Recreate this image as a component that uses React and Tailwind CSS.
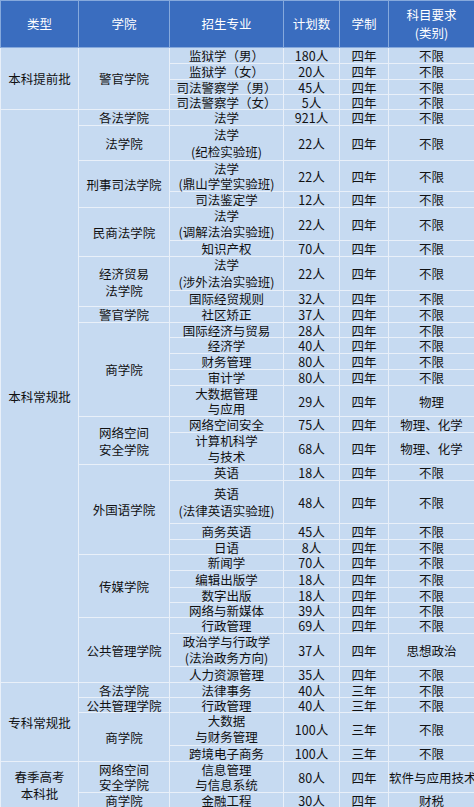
import React from "react";

const rows = [
  { h: 16, t: ["本科提前批", 4], c: ["警官学院", 4], m: "监狱学（男）", n: "180人", y: "四年", r: "不限" },
  { h: 16, m: "监狱学（女）", n: "20人", y: "四年", r: "不限" },
  { h: 15, m: "司法警察学（男）", n: "45人", y: "四年", r: "不限" },
  { h: 15, m: "司法警察学（女）", n: "5人", y: "四年", r: "不限" },
  { h: 16, t: ["本科常规批", 27], c: ["各法学院", 1], m: "法学", n: "921人", y: "四年", r: "不限" },
  { h: 35, c: ["法学院", 1], m: ["法学", "(纪检实验班)"], n: "22人", y: "四年", r: "不限" },
  { h: 31, c: ["刑事司法学院", 2], m: ["法学", "(鼎山学堂实验班)"], n: "22人", y: "四年", r: "不限" },
  { h: 16, m: "司法鉴定学", n: "12人", y: "四年", r: "不限" },
  { h: 33, c: ["民商法学院", 2], m: ["法学", "(调解法治实验班)"], n: "22人", y: "四年", r: "不限" },
  { h: 16, m: "知识产权", n: "70人", y: "四年", r: "不限" },
  { h: 34, c: [["经济贸易", "法学院"], 2], m: ["法学", "(涉外法治实验班)"], n: "22人", y: "四年", r: "不限" },
  { h: 16, m: "国际经贸规则", n: "32人", y: "四年", r: "不限" },
  { h: 16, c: ["警官学院", 1], m: "社区矫正", n: "37人", y: "四年", r: "不限" },
  { h: 15, c: ["商学院", 5], m: "国际经济与贸易", n: "28人", y: "四年", r: "不限" },
  { h: 16, m: "经济学", n: "40人", y: "四年", r: "不限" },
  { h: 16, m: "财务管理", n: "80人", y: "四年", r: "不限" },
  { h: 16, m: "审计学", n: "80人", y: "四年", r: "不限" },
  { h: 31, m: ["大数据管理", "与应用"], n: "29人", y: "四年", r: "物理" },
  { h: 16, c: [["网络空间", "安全学院"], 2], m: "网络空间安全", n: "75人", y: "四年", r: "物理、化学" },
  { h: 32, m: ["计算机科学", "与技术"], n: "68人", y: "四年", r: "物理、化学" },
  { h: 16, c: ["外国语学院", 4], m: "英语", n: "18人", y: "四年", r: "不限" },
  { h: 43, m: ["英语", "(法律英语实验班)"], n: "48人", y: "四年", r: "不限" },
  { h: 16, m: "商务英语", n: "45人", y: "四年", r: "不限" },
  { h: 15, m: "日语", n: "8人", y: "四年", r: "不限" },
  { h: 16, c: ["传媒学院", 4], m: "新闻学", n: "70人", y: "四年", r: "不限" },
  { h: 17, m: "编辑出版学", n: "18人", y: "四年", r: "不限" },
  { h: 15, m: "数字出版", n: "18人", y: "四年", r: "不限" },
  { h: 15, m: "网络与新媒体", n: "39人", y: "四年", r: "不限" },
  { h: 16, c: ["公共管理学院", 3], m: "行政管理", n: "69人", y: "四年", r: "不限" },
  { h: 33, m: ["政治学与行政学", "(法治政务方向)"], n: "37人", y: "四年", r: "思想政治" },
  { h: 16, m: "人力资源管理", n: "35人", y: "四年", r: "不限" },
  { h: 15, t: ["专科常规批", 4], c: ["各法学院", 1], m: "法律事务", n: "40人", y: "三年", r: "不限" },
  { h: 15, c: ["公共管理学院", 1], m: "行政管理", n: "40人", y: "三年", r: "不限" },
  { h: 33, c: ["商学院", 2], m: ["大数据", "与财务管理"], n: "100人", y: "三年", r: "不限" },
  { h: 16, m: "跨境电子商务", n: "100人", y: "三年", r: "不限" },
  { h: 31, t: [["春季高考", "本科批"], 2], c: [["网络空间", "安全学院"], 1], m: ["信息管理", "与信息系统"], n: "80人", y: "四年", r: "软件与应用技术" },
  { h: 15, c: ["商学院", 1], m: "金融工程", n: "30人", y: "四年", r: "财税" },
];

function Txt({ v, lh }) {
  if (Array.isArray(v)) {
    return (
      <div style={{ lineHeight: lh + "px" }}>
        {v.map((s, i) => (
          <div key={i}>{s}</div>
        ))}
      </div>
    );
  }
  return <div className="leading-[13px]">{v}</div>;
}

const cell = "border border-[#e9f0f9] p-0 text-center align-middle whitespace-nowrap";
const head = "border border-[#86a9dc] p-0 text-center align-middle whitespace-nowrap font-normal";

export default function App() {
  return (
    <div
      className="w-[474px] h-[807px] overflow-hidden bg-[#c6daf1]"
      style={{ fontFamily: '"Noto Sans CJK SC", "Noto Sans", sans-serif' }}
    >
      <table className="w-[474px] table-fixed border-collapse text-[12.5px] text-[#111]">
        <colgroup>
          <col className="w-[78px]" />
          <col className="w-[91px]" />
          <col className="w-[114px]" />
          <col className="w-[56px]" />
          <col className="w-[49px]" />
          <col className="w-[86px]" />
        </colgroup>
        <thead>
          <tr className="h-[47px] bg-[#3a6dbf] text-white">
            <th className={head}>类型</th>
            <th className={head}>学院</th>
            <th className={head}>招生专业</th>
            <th className={head}>计划数</th>
            <th className={head}>学制</th>
            <th className={head}>
              <div className="leading-[18px]">
                <div>科目要求</div>
                <div>(类别)</div>
              </div>
            </th>
          </tr>
        </thead>
        <tbody>
          {rows.map((r, i) => {
            const lh = Math.min(17, Math.floor(((r.h - 1) / 2) * 2) / 2);
            return (
              <tr key={i} style={{ height: r.h }}>
                {r.t && (
                  <td className={cell} rowSpan={r.t[1]}>
                    <Txt v={r.t[0]} lh={17} />
                  </td>
                )}
                {r.c && (
                  <td className={cell} rowSpan={r.c[1]}>
                    <Txt v={r.c[0]} lh={r.c[1] > 1 ? 17 : lh} />
                  </td>
                )}
                <td className={cell}>
                  <Txt v={r.m} lh={lh} />
                </td>
                <td className={cell}>
                  <Txt v={r.n} lh={lh} />
                </td>
                <td className={cell}>
                  <Txt v={r.y} lh={lh} />
                </td>
                <td className={cell}>
                  <Txt v={r.r} lh={lh} />
                </td>
              </tr>
            );
          })}
        </tbody>
      </table>
    </div>
  );
}
